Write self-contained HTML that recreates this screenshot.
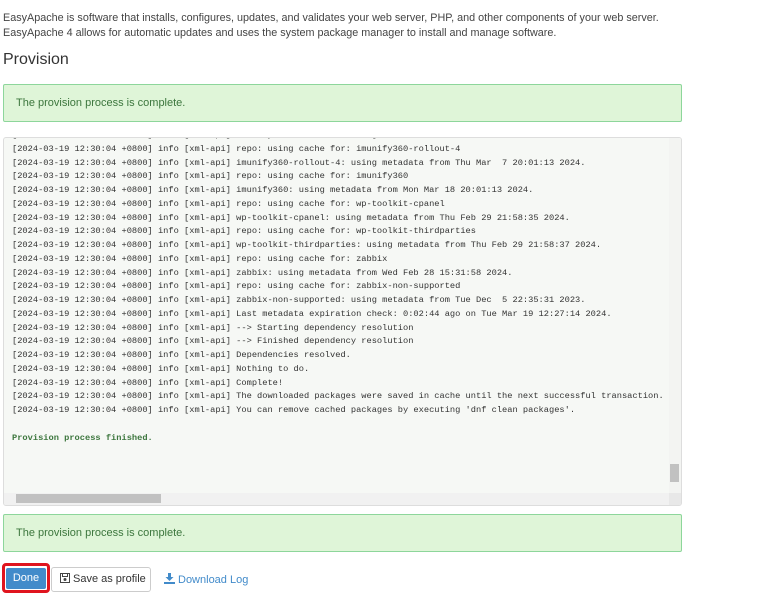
<!DOCTYPE html>
<html><head><meta charset="utf-8"><style>
body{margin:0;width:768px;height:602px;background:#fff;font-family:"Liberation Sans",sans-serif;color:#333;position:relative;overflow:hidden}
.intro{position:absolute;left:3px;top:11px;font-size:10.8px;line-height:15px;color:#444}
h2{position:absolute;left:3px;top:51px;margin:0;font-size:16px;font-weight:normal;color:#333}
.alert{position:absolute;left:3px;width:679px;background:#dff5d8;border:1px solid #8dd69b;border-radius:2px;color:#3c763d;font-size:11px;box-sizing:border-box;padding-left:12px}
.log{position:absolute;left:3px;top:137px;width:679px;height:369px;box-sizing:border-box;border:1px solid #ddd;border-radius:3px;background:#f6f8f5;overflow:hidden}
pre{margin:0;position:absolute;left:8px;top:-9px;font-family:"Liberation Mono",monospace;font-size:8.7px;line-height:13.75px;color:#333}
.fin{color:#3c763d;font-weight:bold}
.vs{position:absolute;right:0;top:0;width:12px;height:355px;background:#f3f4f2}
.vt{position:absolute;right:2px;top:326px;width:9px;height:18px;background:#c1c1c1}
.hs{position:absolute;left:0;bottom:0;width:665px;height:12px;background:#f1f1f1}
.ht{position:absolute;left:12px;bottom:2px;width:145px;height:9px;background:#c1c1c1}
.corner{position:absolute;right:0;bottom:0;width:12px;height:12px;background:#e8e8e8}
.done{position:absolute;left:2px;top:563px;width:48px;height:30px;box-sizing:border-box;border:3px solid #e0141e;border-radius:4px}
.done div{position:absolute;left:1px;top:2px;width:40px;height:21px;background:#428bca;color:#fff;font-size:11px;line-height:21px;text-align:center;border-radius:2px}
.save{position:absolute;left:51px;top:567px;width:100px;height:25px;box-sizing:border-box;border:1px solid #ccc;border-radius:3px;font-size:11px;line-height:23px;color:#333;padding-left:8px}
.dl{position:absolute;left:164px;top:573px;font-size:11px;color:#428bca}
</style></head><body>
<div class="intro">EasyApache is software that installs, configures, updates, and validates your web server, PHP, and other components of your web server.<br>EasyApache 4 allows for automatic updates and uses the system package manager to install and manage software.</div>
<h2>Provision</h2>
<div class="alert" style="top:84px;height:38px;line-height:36px">The provision process is complete.</div>
<div class="log"><pre>[2024-03-19 12:30:04 +0800] info [xml-api] imunify360-rollout-3: using metadata from Tue Mar  5 09:00:00 2024.
[2024-03-19 12:30:04 +0800] info [xml-api] repo: using cache for: imunify360-rollout-4
[2024-03-19 12:30:04 +0800] info [xml-api] imunify360-rollout-4: using metadata from Thu Mar  7 20:01:13 2024.
[2024-03-19 12:30:04 +0800] info [xml-api] repo: using cache for: imunify360
[2024-03-19 12:30:04 +0800] info [xml-api] imunify360: using metadata from Mon Mar 18 20:01:13 2024.
[2024-03-19 12:30:04 +0800] info [xml-api] repo: using cache for: wp-toolkit-cpanel
[2024-03-19 12:30:04 +0800] info [xml-api] wp-toolkit-cpanel: using metadata from Thu Feb 29 21:58:35 2024.
[2024-03-19 12:30:04 +0800] info [xml-api] repo: using cache for: wp-toolkit-thirdparties
[2024-03-19 12:30:04 +0800] info [xml-api] wp-toolkit-thirdparties: using metadata from Thu Feb 29 21:58:37 2024.
[2024-03-19 12:30:04 +0800] info [xml-api] repo: using cache for: zabbix
[2024-03-19 12:30:04 +0800] info [xml-api] zabbix: using metadata from Wed Feb 28 15:31:58 2024.
[2024-03-19 12:30:04 +0800] info [xml-api] repo: using cache for: zabbix-non-supported
[2024-03-19 12:30:04 +0800] info [xml-api] zabbix-non-supported: using metadata from Tue Dec  5 22:35:31 2023.
[2024-03-19 12:30:04 +0800] info [xml-api] Last metadata expiration check: 0:02:44 ago on Tue Mar 19 12:27:14 2024.
[2024-03-19 12:30:04 +0800] info [xml-api] --> Starting dependency resolution
[2024-03-19 12:30:04 +0800] info [xml-api] --> Finished dependency resolution
[2024-03-19 12:30:04 +0800] info [xml-api] Dependencies resolved.
[2024-03-19 12:30:04 +0800] info [xml-api] Nothing to do.
[2024-03-19 12:30:04 +0800] info [xml-api] Complete!
[2024-03-19 12:30:04 +0800] info [xml-api] The downloaded packages were saved in cache until the next successful transaction.
[2024-03-19 12:30:04 +0800] info [xml-api] You can remove cached packages by executing 'dnf clean packages'.

<span class="fin">Provision process finished.</span></pre>
<div class="vs"></div><div class="vt"></div><div class="hs"></div><div class="ht"></div><div class="corner"></div>
</div>
<div class="alert" style="top:514px;height:38px;line-height:36px">The provision process is complete.</div>
<div class="done"><div>Done</div></div>
<div class="save"><svg width="10" height="10" viewBox="0 0 10 10" style="vertical-align:-1px;margin-right:3px"><rect x="0.5" y="0.5" width="9" height="9" fill="none" stroke="#444"/><rect x="2.5" y="0.5" width="5" height="3" fill="none" stroke="#444"/><circle cx="5" cy="6.5" r="1.5" fill="#444"/></svg>Save as profile</div>
<div class="dl"><svg width="11" height="11" viewBox="0 0 11 11" style="vertical-align:-1px;margin-right:3px"><path d="M4 0h3v4h2.5L5.5 8 1.5 4H4z" fill="#428bca"/><rect x="0" y="9" width="11" height="2" fill="#428bca"/></svg>Download Log</div>
</body></html>
